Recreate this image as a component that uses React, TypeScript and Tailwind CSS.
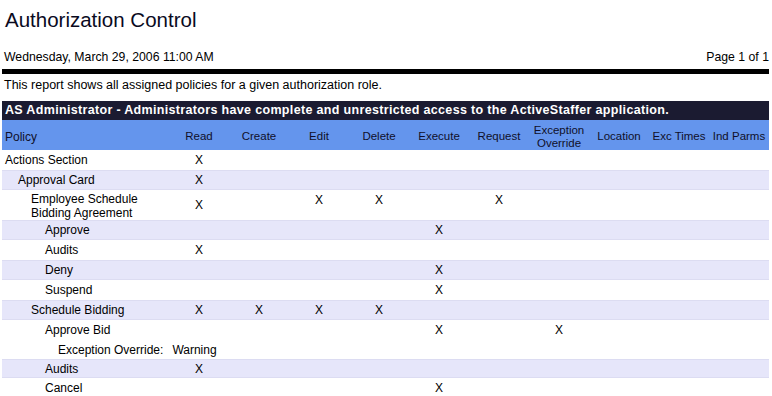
const columns = [
  "Read",
  "Create",
  "Edit",
  "Delete",
  "Execute",
  "Request",
  "Exception Override",
  "Location",
  "Exc Times",
  "Ind Parms",
];

type Row = {
  label: string;
  level: number;
  marks: number[];
  shaded?: boolean;
  tall?: boolean;
  short?: boolean;
  note?: string;
};

const rows: Row[] = [
  { label: "Actions Section", level: 0, marks: [0] },
  { label: "Approval Card", level: 1, marks: [0], shaded: true },
  { label: "Employee Schedule Bidding Agreement", level: 2, marks: [0, 2, 3, 5], tall: true },
  { label: "Approve", level: 3, marks: [4], shaded: true },
  { label: "Audits", level: 3, marks: [0] },
  { label: "Deny", level: 3, marks: [4], shaded: true },
  { label: "Suspend", level: 3, marks: [4] },
  { label: "Schedule Bidding", level: 2, marks: [0, 1, 2, 3], shaded: true },
  { label: "Approve Bid", level: 3, marks: [4, 6] },
  { label: "Exception Override:", level: 4, marks: [], note: "Warning", short: true },
  { label: "Audits", level: 3, marks: [0], shaded: true, short: true },
  { label: "Cancel", level: 3, marks: [4] },
];

const indent = ["pl-[3px]", "pl-[16px]", "pl-[29px]", "pl-[43px]", "pl-[56px]"];

function PolicyRow({ row }: { row: Row }) {
  return (
    <div
      className={
        "grid grid-cols-[167px_repeat(10,60px)] items-center " +
        (row.shaded ? "bg-[#e6e6fa] border-y border-[#dcdcf2] " : "") +
        (row.tall ? "h-[30px]" : row.short ? "h-[19px]" : "h-[20px]")
      }
    >
      {row.note ? (
        <div className={"col-span-3 flex gap-[9px] " + indent[row.level]}>
          <span>{row.label}</span>
          <span>{row.note}</span>
        </div>
      ) : (
        <div className={"leading-[14px] " + indent[row.level] + (row.tall ? " pr-[30px] pt-[2px]" : "")}>
          {row.label}
        </div>
      )}
      {!row.note &&
        columns.map((c, i) => (
          <div
            key={c}
            className={
              "text-center " + (row.tall && i > 0 ? "self-start pt-[1px]" : "")
            }
          >
            {row.marks.includes(i) ? "X" : ""}
          </div>
        ))}
    </div>
  );
}

export default function App() {
  return (
    <div className="w-[772px] h-[396px] overflow-hidden bg-white text-black font-['Liberation_Sans',Arial,sans-serif] text-[12px]">
      <div className="pl-[2px] pr-[3px]">
        {/* Title */}
        <h1 className="pt-[7px] pl-[3px] text-[20.5px] leading-[26px] text-[#0a0a1e]">
          Authorization Control
        </h1>

        {/* Date / page */}
        <div className="mt-[17px] flex justify-between pl-[2px] leading-[14px] text-[12.25px]">
          <span>Wednesday, March 29, 2006 11:00 AM</span>
          <span>Page 1 of 1</span>
        </div>
        <div className="mt-[5px] h-[5px] bg-black" />

        <p className="mt-[4px] pl-[2px] leading-[14px] text-[12.5px]">
          This report shows all assigned policies for a given authorization role.
        </p>

        {/* Role header */}
        <div className="mt-[9px] h-[19px] bg-[#1b1b31] text-white font-bold text-[12.5px] leading-[19px] pl-[3px] tracking-[0.33px]">
          AS Administrator - Administrators have complete and unrestricted access to the ActiveStaffer application.
        </div>

        {/* Column header */}
        <div className="grid grid-cols-[167px_repeat(10,60px)] items-center h-[30px] pt-[3px] bg-[#6495ed] text-[#10102a] text-[11.5px]">
          <div className="pl-[3px] text-[12px]">Policy</div>
          {columns.map((c) => (
            <div key={c} className="text-center leading-[13px] px-[2px]">
              {c === "Exception Override" ? (
                <>
                  Exception
                  <br />
                  Override
                </>
              ) : (
                c
              )}
            </div>
          ))}
        </div>

        {rows.map((r, i) => (
          <PolicyRow key={i} row={r} />
        ))}
      </div>
    </div>
  );
}
